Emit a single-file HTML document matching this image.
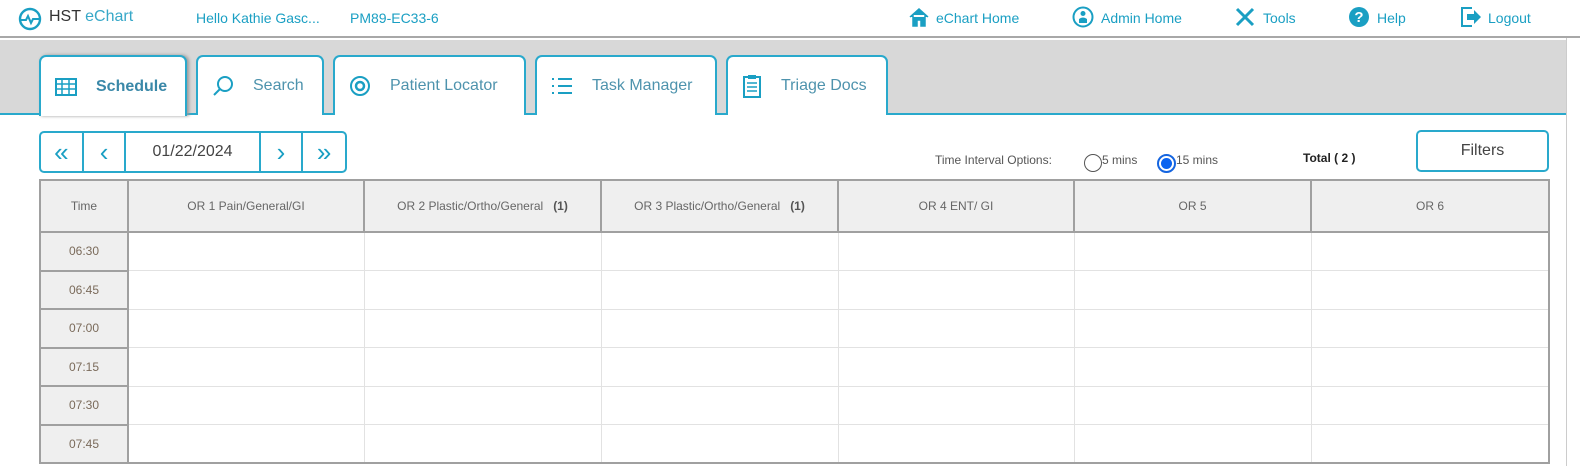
<!DOCTYPE html>
<html><head><style>
*{box-sizing:border-box;margin:0;padding:0}
body{width:1580px;height:466px;overflow:hidden;background:#fff;font-family:"Liberation Sans",sans-serif;position:relative}
.a{position:absolute}
.hdr{left:0;top:0;width:1580px;height:38px;background:#fff;border-bottom:2px solid #a8a8a8}
.t{color:#1a9fc3;font-size:14px}
.band{left:0;top:40px;width:1566px;height:73px;background:#d8d8d8}
.sb{left:1566px;top:38px;width:14px;height:428px;background:#fff;border-left:1px solid #ccc}
.tl{left:0;top:113px;width:1566px;height:2px;background:#29a9cc}
.tab{top:55px;height:60px;background:#fff;border:2px solid #29a9cc;border-bottom:none;border-radius:7px 7px 0 0;color:#4e93ad;font-size:16px;display:flex;align-items:center}
.tab svg{margin-left:14px;margin-right:19px}
.nav{left:39px;top:131px;height:42px;width:308px;border:2px solid #29a9cc;border-radius:5px;display:flex}
.nav div{border-right:2px solid #29a9cc;display:flex;align-items:center;justify-content:center;color:#1a9fc3;font-size:16px}
.nav div:last-child{border-right:none}
table{position:absolute;left:39px;top:179px;border-collapse:collapse;width:1511px}
td,th{height:38.5px;border:1px solid #e2e2e2;font-size:12px;color:#666;font-weight:normal}
th{height:52px;background:#efefef;border:2px solid #a0a0a0}
td.tm{background:#efefef;border:2px solid #a0a0a0;border-top:1px solid #bbb;text-align:center;color:#7a6a5a}
table{border:2px solid #a0a0a0}
b{color:#555}
</style></head><body>
<div class="a hdr"></div>
<svg class="a" style="left:18px;top:7px" width="24" height="24" viewBox="0 0 24 24"><circle cx="12" cy="12" r="10" fill="none" stroke="#1a9fc3" stroke-width="2.4"/><path d="M3 13h5l2-4 3 7 2-4h6" fill="none" stroke="#1a9fc3" stroke-width="2"/></svg>
<div class="a" style="left:49px;top:8px;font-size:16px;color:#333">HST <span style="color:#37a8c8">eChart</span></div>
<div class="a t" style="left:196px;top:10px">Hello Kathie Gasc...</div>
<div class="a t" style="left:350px;top:10px">PM89-EC33-6</div>
<svg class="a" style="left:908px;top:6px" width="22" height="22" viewBox="0 0 22 22"><path d="M2 11L11 3l9 8M5 9v11h4v-6h4v6h4V9" fill="#1a9fc3" stroke="#1a9fc3" stroke-width="1.5"/></svg>
<div class="a t" style="left:936px;top:10px">eChart Home</div>
<svg class="a" style="left:1072px;top:6px" width="22" height="22" viewBox="0 0 22 22"><circle cx="11" cy="11" r="9.5" fill="none" stroke="#1a9fc3" stroke-width="2"/><circle cx="11" cy="7.5" r="2.5" fill="#1a9fc3"/><path d="M7 17v-4q4-3 8 0v4z" fill="#1a9fc3"/></svg>
<div class="a t" style="left:1101px;top:10px">Admin Home</div>
<svg class="a" style="left:1234px;top:6px" width="22" height="22" viewBox="0 0 22 22"><path d="M3 3l16 16M19 3L3 19" stroke="#1a9fc3" stroke-width="3"/></svg>
<div class="a t" style="left:1263px;top:10px">Tools</div>
<svg class="a" style="left:1348px;top:6px" width="22" height="22" viewBox="0 0 22 22"><circle cx="11" cy="11" r="10" fill="#1a9fc3"/><text x="11" y="16" text-anchor="middle" font-size="15" font-weight="bold" fill="#fff" font-family="Liberation Sans">?</text></svg>
<div class="a t" style="left:1377px;top:10px">Help</div>
<svg class="a" style="left:1460px;top:5px" width="22" height="24" viewBox="0 0 22 24"><path d="M12 3H2v18h10" fill="none" stroke="#1a9fc3" stroke-width="2"/><path d="M7 9h7V5l7 7-7 7v-4H7z" fill="#1a9fc3"/></svg>
<div class="a t" style="left:1488px;top:10px">Logout</div>
<div class="a band"></div>
<div class="a sb"></div>
<div class="a tl"></div>
<div class="a tab" style="left:39px;width:148px;height:61px;font-weight:bold;color:#3a88a8;box-shadow:2px 0 3px #999"><svg width="22" height="18" viewBox="0 0 22 18"><rect x="1" y="1" width="20" height="16" fill="none" stroke="#1a9fc3" stroke-width="2"/><path d="M1 6h20M1 11h20M7 1v16M14 1v16" stroke="#1a9fc3" stroke-width="1.5"/></svg>Schedule</div>
<div class="a tab" style="left:196px;width:128px"><svg width="22" height="22" viewBox="0 0 22 22"><circle cx="13" cy="9" r="7" fill="none" stroke="#1a9fc3" stroke-width="2"/><path d="M8 14l-6 6" stroke="#1a9fc3" stroke-width="2"/></svg>Search</div>
<div class="a tab" style="left:333px;width:193px"><svg width="22" height="22" viewBox="0 0 22 22"><circle cx="11" cy="11" r="9" fill="none" stroke="#1a9fc3" stroke-width="2"/><circle cx="11" cy="11" r="4" fill="none" stroke="#1a9fc3" stroke-width="2.5"/></svg>Patient Locator</div>
<div class="a tab" style="left:535px;width:182px"><svg width="22" height="18" viewBox="0 0 22 18"><path d="M1 2h2M1 9h2M1 16h2M7 2h14M7 9h14M7 16h14" stroke="#1a9fc3" stroke-width="2"/></svg>Task Manager</div>
<div class="a tab" style="left:726px;width:162px"><svg width="20" height="24" viewBox="0 0 20 24"><rect x="2" y="3" width="16" height="20" fill="none" stroke="#1a9fc3" stroke-width="2"/><rect x="6" y="1" width="8" height="4" fill="#1a9fc3"/><path d="M5 9h10M5 13h10M5 17h10" stroke="#1a9fc3" stroke-width="1.6"/></svg>Triage Docs</div>
<div class="a nav">
<div style="width:43px;font-size:26px">«</div><div style="width:43px;font-size:26px">‹</div><div style="width:135px;color:#444">01/22/2024</div><div style="width:43px;font-size:26px">›</div><div style="width:42px;font-size:26px">»</div>
</div>
<div class="a" style="left:935px;top:153px;font-size:12px;color:#555">Time Interval Options:</div>
<div class="a" style="left:1084px;top:154px;width:18px;height:18px;border-radius:50%;border:1.5px solid #555"></div>
<div class="a" style="left:1102px;top:153px;font-size:12px;color:#555">5 mins</div>
<div class="a" style="left:1157px;top:154px;width:19px;height:19px;border-radius:50%;border:2px solid #1565e0;background:#fff"><div style="margin:2px;width:11px;height:11px;border-radius:50%;background:#0a63f0"></div></div>
<div class="a" style="left:1176px;top:153px;font-size:12px;color:#555">15 mins</div>
<div class="a" style="left:1303px;top:151px;font-size:12px;color:#222;font-weight:bold">Total ( 2 )</div>
<div class="a" style="left:1416px;top:130px;width:133px;height:42px;border:2px solid #29a9cc;border-radius:5px;display:flex;align-items:center;justify-content:center;font-size:16px;color:#444">Filters</div>
<table>
<tr><th style="width:88px">Time</th><th style="width:236px">OR 1 Pain/General/GI</th><th style="width:237px">OR 2 Plastic/Ortho/General&nbsp;&nbsp; <b>(1)</b></th><th style="width:237px">OR 3 Plastic/Ortho/General&nbsp;&nbsp; <b>(1)</b></th><th style="width:236px">OR 4 ENT/ GI</th><th style="width:237px">OR 5</th><th>OR 6</th></tr>
<tr><td class="tm">06:30</td><td></td><td></td><td></td><td></td><td></td><td></td></tr>
<tr><td class="tm">06:45</td><td></td><td></td><td></td><td></td><td></td><td></td></tr>
<tr><td class="tm">07:00</td><td></td><td></td><td></td><td></td><td></td><td></td></tr>
<tr><td class="tm">07:15</td><td></td><td></td><td></td><td></td><td></td><td></td></tr>
<tr><td class="tm">07:30</td><td></td><td></td><td></td><td></td><td></td><td></td></tr>
<tr><td class="tm">07:45</td><td></td><td></td><td></td><td></td><td></td><td></td></tr>
</table>
</body></html>
